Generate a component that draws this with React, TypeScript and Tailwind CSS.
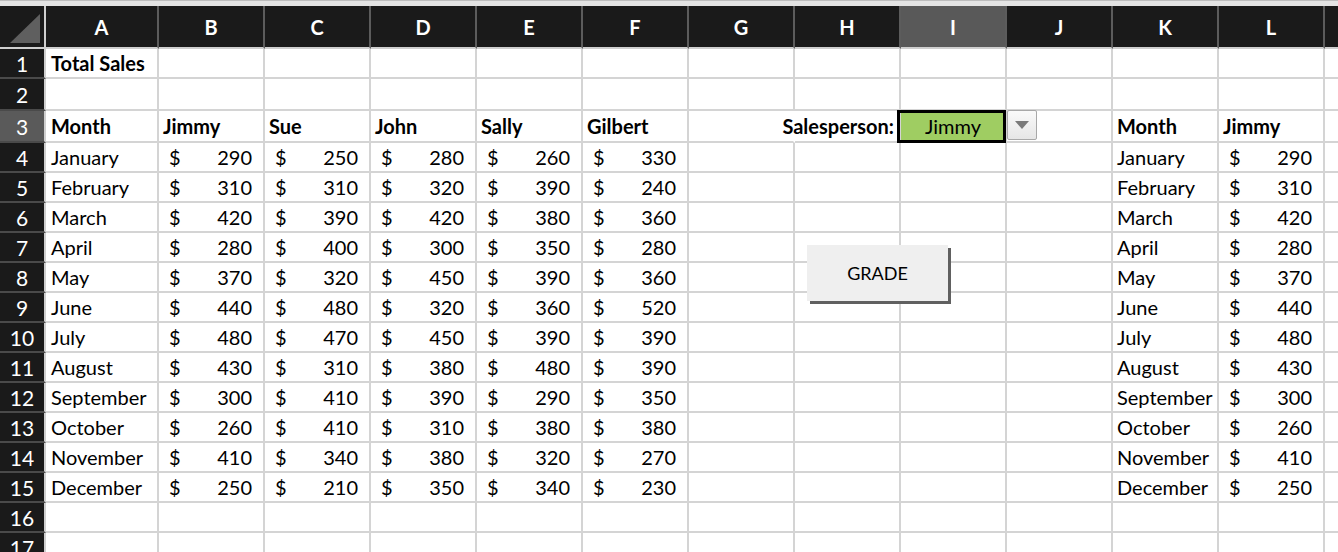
import React from 'react'

const COLS = ['A', 'B', 'C', 'D', 'E', 'F', 'G', 'H', 'I', 'J', 'K', 'L']
const MONTHS = ['January', 'February', 'March', 'April', 'May', 'June', 'July', 'August', 'September', 'October', 'November', 'December']
const PEOPLE = [
  { name: 'Jimmy', sales: [290, 310, 420, 280, 370, 440, 480, 430, 300, 260, 410, 250] },
  { name: 'Sue', sales: [250, 310, 390, 400, 320, 480, 470, 310, 410, 410, 340, 210] },
  { name: 'John', sales: [280, 320, 420, 300, 450, 320, 450, 380, 390, 310, 380, 350] },
  { name: 'Sally', sales: [260, 390, 380, 350, 390, 360, 390, 480, 290, 380, 320, 340] },
  { name: 'Gilbert', sales: [330, 240, 360, 280, 360, 520, 390, 390, 350, 380, 270, 230] },
]

// row heights incl. the 2px bottom gridline
const ROW_H: Record<number, string> = { 1: 'h-[30px]', 2: 'h-[32px]', 3: 'h-[32px]' }

function Money({ v }: { v: number }) {
  return (
    <div className="flex w-full justify-between pl-[10px] pr-[11px]">
      <span>$</span>
      <span>{v}</span>
    </div>
  )
}

function cellContent(row: number, col: number): React.ReactNode {
  if (row === 1 && col === 0) return <span className="pl-[5px] font-bold">Total Sales</span>
  if (row === 3) {
    if (col === 0 || col === 10) return <span className={`${col === 0 ? 'pl-[5px]' : 'pl-[4px]'} font-bold`}>Month</span>
    if (col >= 1 && col <= 5) return <span className="pl-[4px] font-bold">{PEOPLE[col - 1].name}</span>
    if (col === 11) return <span className="pl-[4px] font-bold">Jimmy</span>
  }
  if (row >= 4 && row <= 15) {
    const m = row - 4
    if (col === 0) return <span className="pl-[5px]">{MONTHS[m]}</span>
    if (col >= 1 && col <= 5) return <Money v={PEOPLE[col - 1].sales[m]} />
    if (col === 10) return <span className="pl-[4px]">{MONTHS[m]}</span>
    if (col === 11) return <Money v={PEOPLE[0].sales[m]} />
  }
  return null
}

function Row({ row }: { row: number }) {
  const h = ROW_H[row] ?? 'h-[30px]'
  const selected = row === 3
  return (
    <div className={`flex ${h} shrink-0`}>
      <div
        className={`flex w-[46px] shrink-0 items-center justify-center border-r-2 border-b-2 border-r-[#cfcfcf] border-b-[#4a4a4a] text-[21px] text-white ${selected ? 'bg-[#5a5a5a]' : 'bg-[#1a1a1a]'}`}
      >
        {row}
      </div>
      {COLS.map((c, i) => {
        const w = i === 0 ? 'w-[113px]' : 'w-[106px]'
        const hideRight = row === 3 && i === 6
        if (row === 3 && i === 7) {
          return (
            <div key={c} className={`${w} relative flex shrink-0 items-center justify-end border-r-2 border-b-2 border-[#d4d4d4] pr-[5px]`}>
              <span className="whitespace-nowrap font-bold">Salesperson:</span>
            </div>
          )
        }
        if (row === 3 && i === 8) {
          return (
            <div key={c} className={`${w} relative flex shrink-0 items-center justify-center border-r-2 border-b-2 border-[#d4d4d4] bg-[#9fcd62]`}>
              <div className="absolute -top-[1px] -left-[4px] -right-[1px] -bottom-[2px] border-[3px] border-black" />
              <span className="relative">Jimmy</span>
              <div className="absolute left-[106px] top-[-1px] z-10 flex h-[30px] w-[30px] items-center justify-center rounded-[2px] border border-[#a8a8a8] bg-gradient-to-b from-[#fafafa] to-[#e6e6e6]">
                <svg width="16" height="10" viewBox="0 0 16 10">
                  <path d="M1 1 L15 1 L8 9 Z" fill="#7a7a7a" />
                </svg>
              </div>
            </div>
          )
        }
        return (
          <div
            key={c}
            className={`${w} flex shrink-0 items-center overflow-visible whitespace-nowrap border-r-2 border-b-2 border-[#d4d4d4] ${hideRight ? 'border-r-white' : ''}`}
          >
            {cellContent(row, i)}
          </div>
        )
      })}
      <div className="flex-1 border-b-2 border-[#d4d4d4]" />
    </div>
  )
}

export default function App() {
  return (
    <div
      className="relative h-[552px] w-[1338px] overflow-hidden bg-white text-[20px] leading-none text-black"
      style={{ fontFamily: 'Lato, "Open Sans", sans-serif' }}
    >
      <div className="h-[6px] border-t border-[#bdbdbd] bg-[#e4e4e4]" />
      <div className="flex h-[43px]">
        <div className="relative w-[46px] shrink-0 border-r-2 border-b-2 border-[#cfcfcf] bg-[#1a1a1a]">
          <svg className="absolute left-0 top-0" width="44" height="41" viewBox="0 0 44 41">
            <path d="M10 37 L40 37 L40 8 Z" fill="#5f5f5f" />
          </svg>
        </div>
        {COLS.map((c, i) => (
          <div
            key={c}
            className={`${i === 0 ? 'w-[113px]' : 'w-[106px]'} flex shrink-0 items-center justify-center border-r-2 border-b-2 border-r-[#5c5c5c] border-b-[#cfcfcf] font-bold text-white ${c === 'I' ? 'bg-[#595959]' : 'bg-[#1a1a1a]'}`}
          >
            {c}
          </div>
        ))}
        <div className="flex-1 border-b-2 border-[#cfcfcf] bg-[#1a1a1a]" />
      </div>
      {Array.from({ length: 17 }, (_, i) => (
        <Row key={i} row={i + 1} />
      ))}
      <button className="absolute left-[807px] top-[245px] flex h-[56px] w-[141px] items-center justify-center bg-[#efefef] text-[18px] shadow-[3px_3px_0_#606060]">
        GRADE
      </button>
    </div>
  )
}
